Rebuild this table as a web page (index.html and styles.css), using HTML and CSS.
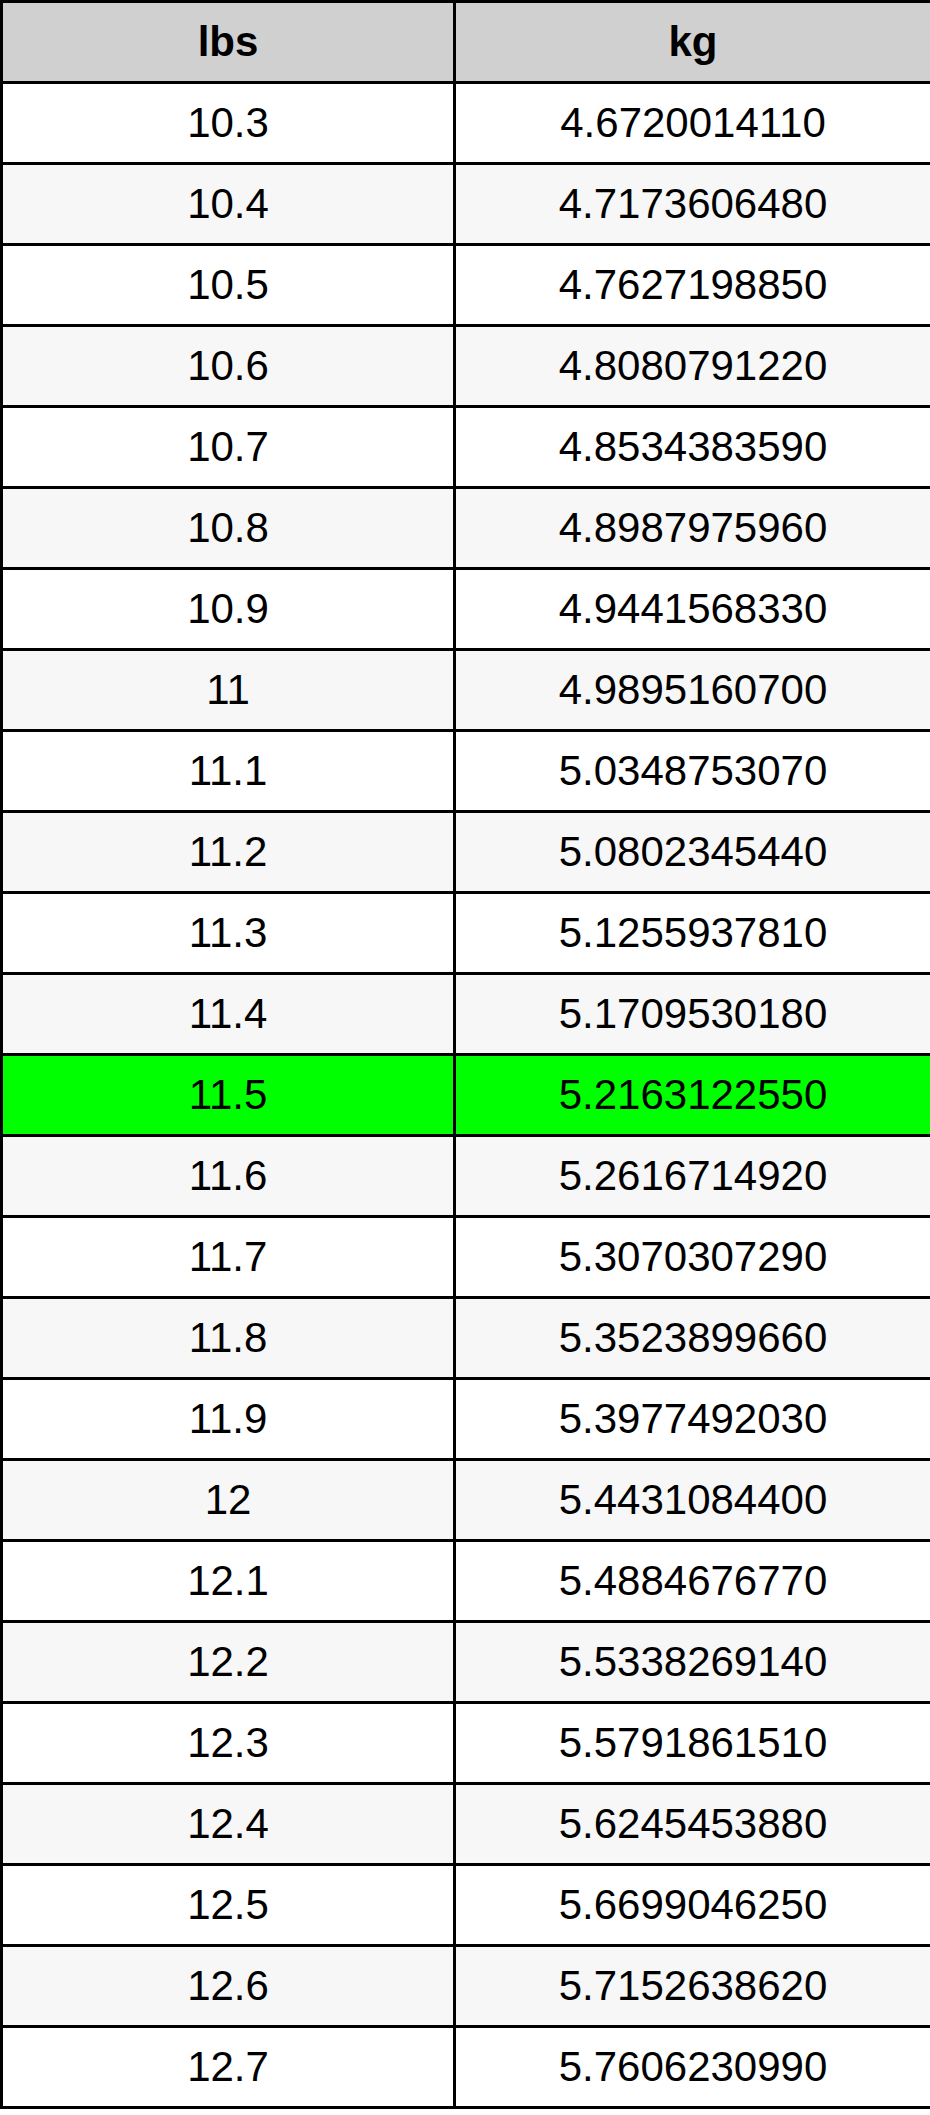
FILE: index.html
```html
<!DOCTYPE html>
<html>
<head>
<meta charset="utf-8">
<link rel="stylesheet" href="styles.css">
</head>
<body>
<table class="conv">
<colgroup><col class="c1"><col class="c2"></colgroup>
<thead>
<tr><th>lbs</th><th>kg</th></tr>
</thead>
<tbody>
<tr><td>10.3</td><td>4.6720014110</td></tr>
<tr class="alt"><td>10.4</td><td>4.7173606480</td></tr>
<tr><td>10.5</td><td>4.7627198850</td></tr>
<tr class="alt"><td>10.6</td><td>4.8080791220</td></tr>
<tr><td>10.7</td><td>4.8534383590</td></tr>
<tr class="alt"><td>10.8</td><td>4.8987975960</td></tr>
<tr><td>10.9</td><td>4.9441568330</td></tr>
<tr class="alt"><td>11</td><td>4.9895160700</td></tr>
<tr><td>11.1</td><td>5.0348753070</td></tr>
<tr class="alt"><td>11.2</td><td>5.0802345440</td></tr>
<tr><td>11.3</td><td>5.1255937810</td></tr>
<tr class="alt"><td>11.4</td><td>5.1709530180</td></tr>
<tr class="hl"><td>11.5</td><td>5.2163122550</td></tr>
<tr class="alt"><td>11.6</td><td>5.2616714920</td></tr>
<tr><td>11.7</td><td>5.3070307290</td></tr>
<tr class="alt"><td>11.8</td><td>5.3523899660</td></tr>
<tr><td>11.9</td><td>5.3977492030</td></tr>
<tr class="alt"><td>12</td><td>5.4431084400</td></tr>
<tr><td>12.1</td><td>5.4884676770</td></tr>
<tr class="alt"><td>12.2</td><td>5.5338269140</td></tr>
<tr><td>12.3</td><td>5.5791861510</td></tr>
<tr class="alt"><td>12.4</td><td>5.6245453880</td></tr>
<tr><td>12.5</td><td>5.6699046250</td></tr>
<tr class="alt"><td>12.6</td><td>5.7152638620</td></tr>
<tr><td>12.7</td><td>5.7606230990</td></tr>
</tbody>
</table>
</body>
</html>
```
FILE: styles.css
```css
html, body {
  margin: 0;
  padding: 0;
  background: #ffffff;
}

.conv {
  border-collapse: collapse;
  table-layout: fixed;
  width: 930px;
  font-family: "Liberation Sans", Arial, sans-serif;
  font-size: 42px;
  color: #000000;
}

.conv .c1 { width: 453px; }
.conv .c2 { width: 477px; }

.conv th,
.conv td {
  border: 3px solid #000000;
  height: 78px;
  padding: 0;
  text-align: center;
  vertical-align: middle;
  line-height: 1;
}

.conv tr {
  height: 81px;
}

.conv th {
  background: #d0d0d0;
  font-weight: bold;
}

.conv tr.alt td {
  background: #f7f7f7;
}

.conv tr.hl td {
  background: #00ff00;
}
```
